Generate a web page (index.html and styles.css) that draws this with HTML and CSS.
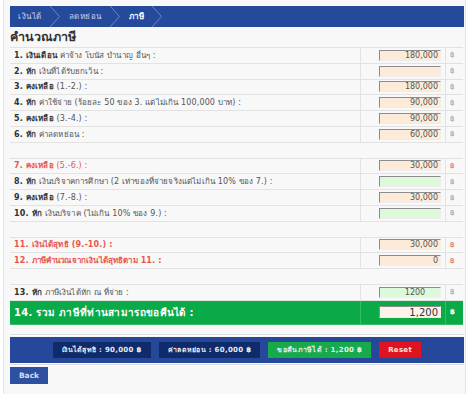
FILE: index.html
```html
<!DOCTYPE html>
<html lang="th">
<head>
    <meta charset="UTF-8">
    <title>คำนวณภาษี</title>
    <link rel="stylesheet" href="styles.css">
</head>
<body>
    <div class="page">
        <div class="crumbs">
            <span class="crumb">เงินได้</span>
            <svg class="sep" width="10" height="21" viewBox="0 0 10 21"><polyline points="0,0 9.5,10.5 0,21" /></svg>
            <span class="crumb">ลดหย่อน</span>
            <svg class="sep" width="10" height="21" viewBox="0 0 10 21"><polyline points="0,0 9.5,10.5 0,21" /></svg>
            <span class="crumb active">ภาษี</span>
            <svg class="sep" width="10" height="21" viewBox="0 0 10 21"><polyline points="0,0 9.5,10.5 0,21" /></svg>
        </div>

        <h3 class="title">คำนวณภาษี</h3>

        <table class="tax">
            <tr>
                <td class="label"><b>1. เงินเดือน</b> ค่าจ้าง โบนัส บำนาญ อื่นๆ :</td>
                <td class="val"><input type="text" value="180,000"></td>
                <td class="unit">฿</td>
            </tr>
            <tr>
                <td class="label"><b>2. หัก</b> เงินที่ได้รับยกเว้น :</td>
                <td class="val"><input type="text" value=""></td>
                <td class="unit">฿</td>
            </tr>
            <tr>
                <td class="label"><b>3. คงเหลือ</b> (1.-2.) :</td>
                <td class="val"><input type="text" value="180,000"></td>
                <td class="unit">฿</td>
            </tr>
            <tr>
                <td class="label"><b>4. หัก</b> ค่าใช้จ่าย (ร้อยละ 50 ของ 3. แต่ไม่เกิน 100,000 บาท) :</td>
                <td class="val"><input type="text" value="90,000"></td>
                <td class="unit">฿</td>
            </tr>
            <tr>
                <td class="label"><b>5. คงเหลือ</b> (3.-4.) :</td>
                <td class="val"><input type="text" value="90,000"></td>
                <td class="unit">฿</td>
            </tr>
            <tr>
                <td class="label"><b>6. หัก</b> ค่าลดหย่อน :</td>
                <td class="val"><input type="text" value="60,000"></td>
                <td class="unit">฿</td>
            </tr>
            <tr class="blank"><td colspan="3"></td></tr>
            <tr class="red">
                <td class="label"><b>7. คงเหลือ</b> (5.-6.) :</td>
                <td class="val"><input type="text" value="30,000"></td>
                <td class="unit">฿</td>
            </tr>
            <tr>
                <td class="label"><b>8. หัก</b> เงินบริจาคการศึกษา (2 เท่าของที่จ่ายจริงแต่ไม่เกิน 10% ของ 7.) :</td>
                <td class="val"><input type="text" class="fill" value=""></td>
                <td class="unit">฿</td>
            </tr>
            <tr>
                <td class="label"><b>9. คงเหลือ</b> (7.-8.) :</td>
                <td class="val"><input type="text" value="30,000"></td>
                <td class="unit">฿</td>
            </tr>
            <tr>
                <td class="label"><b>10. หัก</b> เงินบริจาค (ไม่เกิน 10% ของ 9.) :</td>
                <td class="val"><input type="text" class="fill" value=""></td>
                <td class="unit">฿</td>
            </tr>
            <tr class="blank"><td colspan="3"></td></tr>
            <tr class="red">
                <td class="label"><b>11. เงินได้สุทธิ (9.-10.) :</b></td>
                <td class="val"><input type="text" value="30,000"></td>
                <td class="unit">฿</td>
            </tr>
            <tr class="red">
                <td class="label"><b>12. ภาษีคำนวณจากเงินได้สุทธิตาม 11. :</b></td>
                <td class="val"><input type="text" value="0"></td>
                <td class="unit">฿</td>
            </tr>
            <tr class="blank"><td colspan="3"></td></tr>
            <tr>
                <td class="label"><b>13. หัก</b> ภาษีเงินได้หัก ณ ที่จ่าย :</td>
                <td class="val"><input type="text" class="fill center" value="1200"></td>
                <td class="unit">฿</td>
            </tr>
            <tr class="total">
                <td class="label"><b>14. รวม ภาษีที่ท่านสามารถขอคืนได้ :</b></td>
                <td class="val"><input type="text" value="1,200"></td>
                <td class="unit">฿</td>
            </tr>
        </table>

        <hr class="rule">
        <div class="summary">
            <span class="chip navy">เงินได้สุทธิ : 90,000 ฿</span>
            <span class="chip navy">ค่าลดหย่อน : 60,000 ฿</span>
            <span class="chip green">ขอคืนภาษีได้ : 1,200 ฿</span>
            <button type="button" class="chip reset">Reset</button>
        </div>
        <hr class="rule">

        <button type="button" class="back">Back</button>
    </div>
</body>
</html>
```

FILE: styles.css
```css
body {
    margin: 0;
    background-color: #ffffff;
    font-family: Tahoma, "DejaVu Sans", sans-serif;
    color: #444;
}
.page {
    margin-left: 3px;
    width: 454px;
    padding: 6px 1px 10px 6px;
    background-color: #f8f8f8;
    border-left: 1px solid #e4e4e4;
    border-right: 1px solid #e4e4e4;
}
.crumbs {
    display: flex;
    align-items: center;
    height: 21px;
    background-color: #25499b;
    padding-left: 8px;
}
.crumb {
    font-size: 8px;
    letter-spacing: 0.5px;
    color: #c9d4ee;
    padding: 0 8px 0 0;
}
.crumb.active {
    color: #ffffff;
    font-weight: bold;
}
.sep {
    margin-right: 9px;
}
.sep polyline {
    fill: none;
    stroke: #7f97cf;
    stroke-width: 0.8;
}
.title {
    font-size: 12.5px;
    margin: 3px 0 3px 0;
    color: #333;
    height: 14px;
    line-height: 14px;
}
.tax {
    width: 453px;
    border-collapse: collapse;
    font-size: 8px;
    letter-spacing: 0.15px;
}
.tax td {
    height: 14.8px;
    padding: 0;
    border-top: 1px solid #e2e2e2;
    border-bottom: 1px solid #e2e2e2;
}
.tax .label {
    padding-left: 4px;
    color: #555;
    border-right: 1px solid #e2e2e2;
}
.tax .label b {
    color: #333;
}
.tax .val {
    width: 80px;
    text-align: right;
    padding-right: 4px;
    border-right: 1px solid #e2e2e2;
}
.tax .unit {
    width: 13px;
    padding-left: 4px;
    color: #999;
    font-size: 7px;
}
.tax input {
    width: 62px;
    height: 11px;
    box-sizing: border-box;
    padding: 0 2px 0 0;
    font-family: inherit;
    font-size: 8px;
    line-height: 9px;
    color: #555;
    text-align: right;
    background-color: #fdebd9;
    border-top: 1px solid #8c8c8c;
    border-left: 1px solid #8c8c8c;
    border-right: 1px solid #eeeeee;
    border-bottom: 1px solid #eeeeee;
    vertical-align: middle;
}
.tax input.fill {
    background-color: #dcf9dc;
}
.tax input.center {
    text-align: center;
    padding-left: 12px;
    color: #555;
}
.tax .red .label,
.tax .red .label b,
.tax .red .unit {
    color: #e8574d;
}
.tax .total td {
    height: 23px;
    background-color: #0aaa48;
    border-color: #37bb67;
}
.tax .total .label b {
    color: #ffffff;
    font-size: 10px;
    letter-spacing: 0.3px;
}
.tax .total input {
    height: 12px;
    font-size: 10px;
    line-height: 10px;
    color: #333;
    background-color: #fdf3ea;
}
.tax .total .unit {
    color: #ffffff;
    font-weight: bold;
}
.rule {
    margin: 9px 0 1px 0;
    border: none;
    border-top: 1px solid #dcdcdc;
    border-bottom: 1px solid #ffffff;
}
.summary {
    display: flex;
    justify-content: center;
    align-items: center;
    gap: 8px;
    height: 26px;
    background-color: #26489b;
}
.chip {
    font-family: inherit;
    font-size: 7px;
    font-weight: bold;
    letter-spacing: 0.3px;
    color: #e6ecfa;
    height: 16px;
    line-height: 16px;
    padding: 0 9px;
}
.navy {
    background-color: #0f2b69;
}
.green {
    background-color: #17aa4a;
}
.reset {
    border: none;
    background-color: #e01320;
    color: #ffe8e8;
}
.summary + .rule {
    margin: 1px 0 1px 0;
}
.back {
    display: block;
    font-family: inherit;
    font-size: 7.5px;
    font-weight: bold;
    color: #d6def2;
    background-color: #2d51a0;
    border: none;
    width: 38px;
    height: 17px;
    padding: 0;
}
```
